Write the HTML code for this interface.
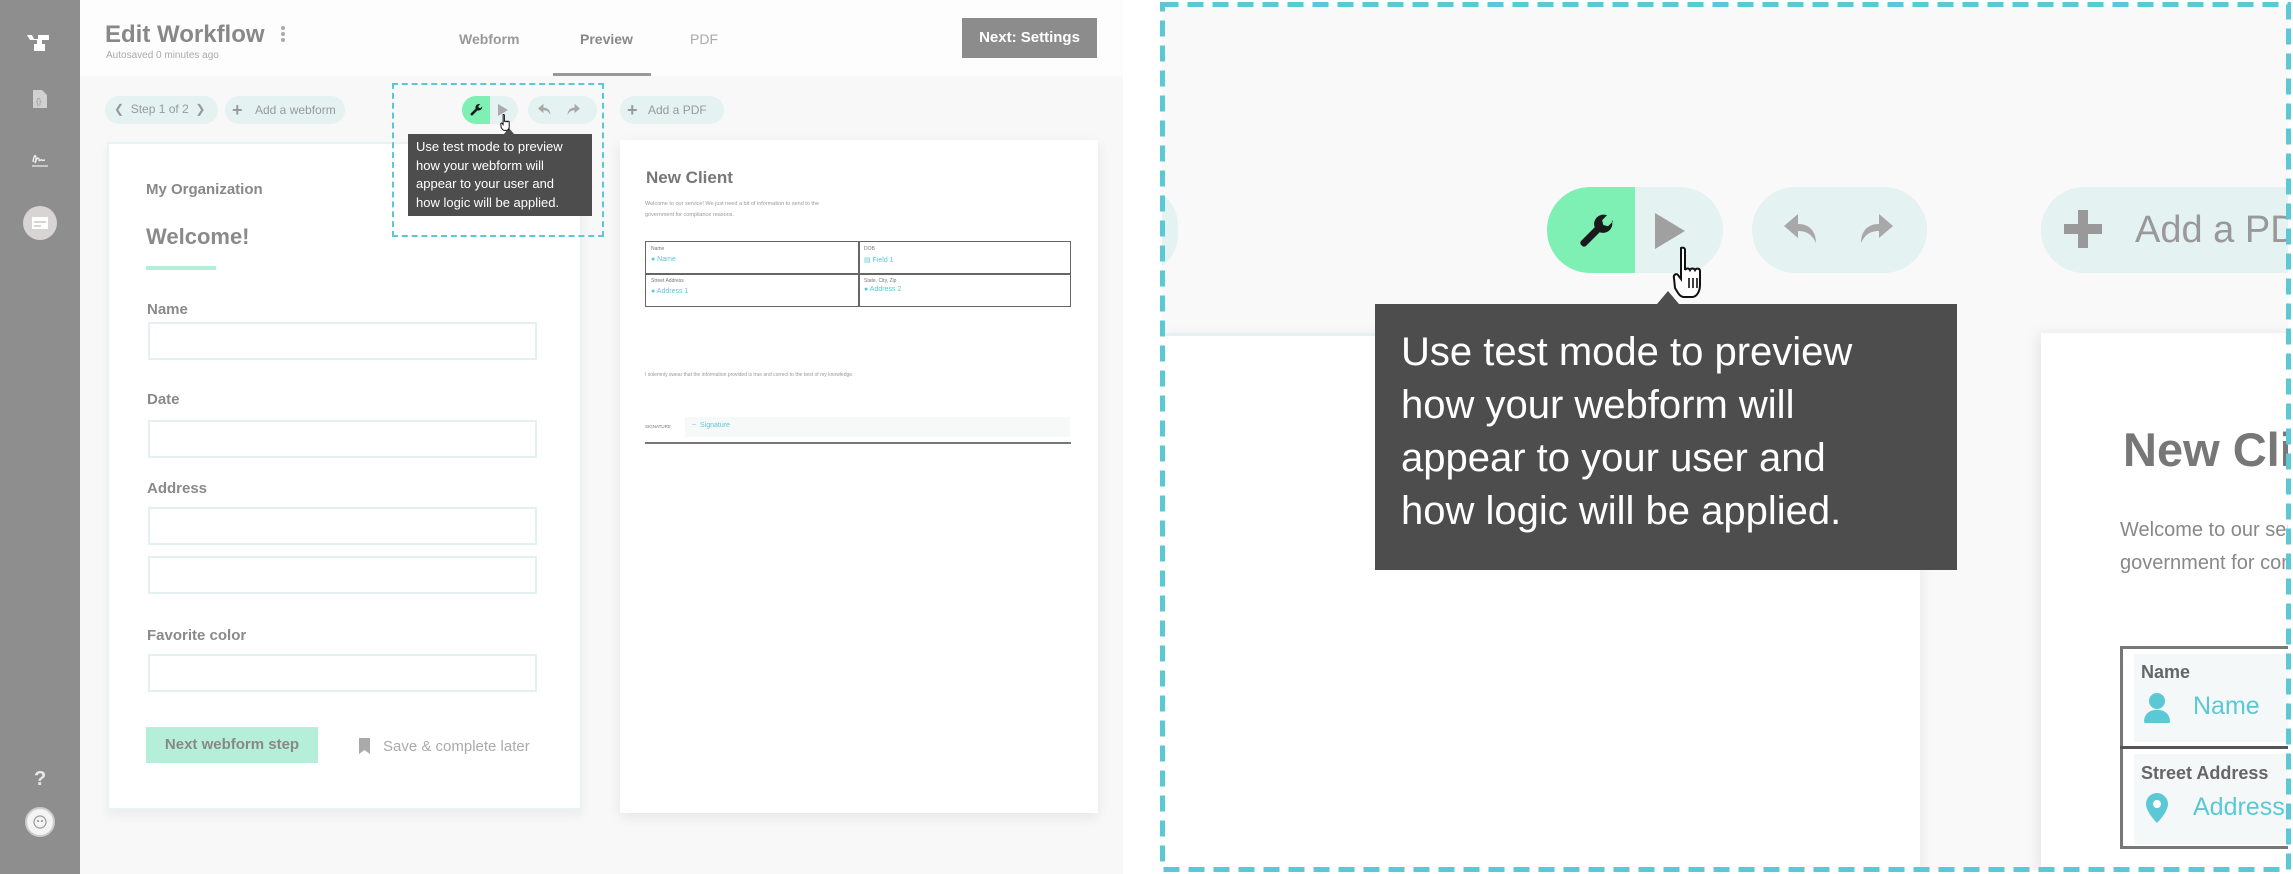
<!DOCTYPE html>
<html><head><meta charset="utf-8">
<style>
*{margin:0;padding:0;box-sizing:border-box}
html,body{width:2293px;height:874px;overflow:hidden}
body{background:#f8f8f8;font-family:"Liberation Sans Narrow","Liberation Sans",sans-serif;position:relative}
.a{position:absolute}
.t{position:absolute;white-space:nowrap}
.pill{position:absolute;background:#e4f2f2;border-radius:16px}
.inp{position:absolute;left:39px;width:389px;height:38px;border:2px solid #e3f1f1;background:#fff}
.lbl{position:absolute;left:38px;font-size:15px;font-weight:bold;color:#8a8a8a}
.L{font-family:'Liberation Sans',sans-serif}
</style></head><body>

<!-- sidebar -->
<div class="a" style="left:0;top:0;width:80px;height:874px;background:#8e8e8e"></div>
<svg class="a" style="left:27px;top:35px" width="26" height="20" viewBox="0 0 26 20"><path d="M0 0h5l2 4h4V0h11v5h-7v4h3v7H7V9h3V5H3z" fill="#fff"/></svg>
<svg class="a" style="left:33px;top:90px" width="14" height="18" viewBox="0 0 14 18"><path d="M0 0h9l5 5v13H0z" fill="#d0d0d0"/><text x="3" y="14" font-size="8" fill="#999">{}</text></svg>
<svg class="a" style="left:31px;top:150px" width="18" height="18" viewBox="0 0 18 18"><path d="M2 12c1-8 3-8 3-3s-2 4 0 1 3-2 3 0 2-1 3 0 2 0 3 0" stroke="#eee" fill="none" stroke-width="1.4"/><path d="M1 16h16" stroke="#eee" stroke-width="1.2"/></svg>
<div class="a" style="left:23px;top:206px;width:34px;height:34px;border-radius:50%;background:#d8d4d4"></div>
<div class="a" style="left:32px;top:217px;width:16px;height:12px;background:#fff"></div>
<div class="a" style="left:34px;top:221px;width:12px;height:2px;background:#d8d4d4"></div>
<div class="a" style="left:34px;top:225px;width:7px;height:1.5px;background:#d8d4d4"></div>
<div class="t" style="left:34px;top:768px;font-size:20px;font-weight:bold;color:#e8e8e8">?</div>
<div class="a" style="left:25px;top:807px;width:30px;height:30px;border-radius:50%;background:#f4f4f4;border:2px solid #ccc"></div>
<svg class="a" style="left:30px;top:812px" width="20" height="20" viewBox="0 0 20 20"><circle cx="10" cy="10" r="6" fill="none" stroke="#999" stroke-width="1.2"/><circle cx="8" cy="9" r="1" fill="#888"/><circle cx="12" cy="9" r="1" fill="#888"/></svg>

<!-- header -->
<div class="a" style="left:80px;top:0;width:1043px;height:76px;background:#fdfdfd"></div>
<div class="t" style="left:105px;top:21px;font-size:24px;font-weight:bold;color:#888">Edit Workflow</div>
<div class="a" style="left:281px;top:26px;width:4px;height:4px;border-radius:2px;background:#aaa;box-shadow:0 6px 0 #aaa,0 12px 0 #aaa"></div>
<div class="t" style="left:106px;top:50px;font-size:10px;color:#aaa">Autosaved 0 minutes ago</div>
<div class="t" style="left:459px;top:31px;font-size:14px;font-weight:bold;color:#999">Webform</div>
<div class="t" style="left:580px;top:31px;font-size:14px;font-weight:bold;color:#888">Preview</div>
<div class="t" style="left:690px;top:31px;font-size:14px;color:#aaa">PDF</div>
<div class="a" style="left:553px;top:73px;width:98px;height:3px;background:#999"></div>
<div class="a" style="left:962px;top:18px;width:135px;height:40px;background:#8c8c8c;color:#fff;font-weight:bold;font-size:15px;text-align:center;line-height:40px">Next: Settings</div>

<!-- toolbar -->
<div class="pill" style="left:105px;top:96px;width:113px;height:28px"></div>
<div class="t" style="left:114px;top:102px;font-size:12px;color:#999">❮&nbsp; Step 1 of 2 &nbsp;❯</div>
<div class="pill" style="left:225px;top:96px;width:120px;height:28px"></div>
<div class="t" style="left:232px;top:100px;font-size:18px;color:#999;font-weight:bold">+</div>
<div class="t" style="left:255px;top:103px;font-size:12px;color:#999">Add a webform</div>
<div class="pill" style="left:462px;top:96px;width:56px;height:28px;overflow:hidden"><div class="a" style="left:0;top:0;width:28px;height:28px;background:#7ef0b3"></div></div>
<svg class="a" style="left:470px;top:103px" width="13" height="13" viewBox="0 0 24 24"><path d="M22.7 6.2l-3.3 3.3-3.2-.8-.8-3.2 3.3-3.3c-2.3-.9-5-.4-6.8 1.4-1.8 1.8-2.3 4.4-1.4 6.6L1.5 19.2c-.8.8-.8 2 0 2.8l.5.5c.8.8 2 .8 2.8 0l9-9c2.2.9 4.8.4 6.6-1.4 1.8-1.8 2.3-4.4 1.4-6.6z" fill="#1a1a1a"/></svg>
<svg class="a" style="left:497px;top:103px" width="12" height="14"><path d="M1 1L11 7L1 13z" fill="#aaa"/></svg>
<div class="pill" style="left:528px;top:96px;width:69px;height:28px"></div>
<svg class="a" style="left:537px;top:103px" width="16" height="14" viewBox="0 0 40 36"><path d="M16 2L2 14l14 12v-7c8 0 14 3 18 12 0-10-5-19-18-19z" fill="#a8a8a8"/></svg>
<svg class="a" style="left:565px;top:103px" width="16" height="14" viewBox="0 0 40 36"><path d="M24 2l14 12-14 12v-7c-8 0-14 3-18 12 0-10 5-19 18-19z" fill="#a8a8a8"/></svg>
<div class="pill" style="left:620px;top:96px;width:104px;height:28px"></div>
<div class="t" style="left:627px;top:100px;font-size:18px;color:#999;font-weight:bold">+</div>
<div class="t" style="left:648px;top:103px;font-size:12px;color:#999">Add a PDF</div>

<!-- left card -->
<div class="a" style="left:107px;top:142px;width:475px;height:668px;background:#fff;border:2px solid #e8f3f3;box-shadow:0 6px 10px rgba(0,0,0,.05)">
 <div class="t" style="left:37px;top:37px;font-size:15px;font-weight:bold;color:#888">My Organization</div>
 <div class="t" style="left:37px;top:80px;font-size:22px;font-weight:bold;color:#8a8a8a">Welcome!</div>
 <div class="a" style="left:37px;top:122px;width:70px;height:4px;background:#b5efd9"></div>
 <div class="lbl" style="top:157px">Name</div>
 <div class="inp" style="top:178px"></div>
 <div class="lbl" style="top:247px">Date</div>
 <div class="inp" style="top:276px"></div>
 <div class="lbl" style="top:336px">Address</div>
 <div class="inp" style="top:363px"></div>
 <div class="inp" style="top:412px"></div>
 <div class="lbl" style="top:483px">Favorite color</div>
 <div class="inp" style="top:510px"></div>
 <div class="a" style="left:37px;top:583px;width:172px;height:36px;background:#b5efd9;color:#888;font-weight:bold;font-size:15px;text-align:center;line-height:36px">Next webform step</div>
 <div class="a" style="left:250px;top:594px;width:11px;height:16px;background:#aaa;clip-path:polygon(0 0,100% 0,100% 100%,50% 75%,0 100%)"></div>
 <div class="t" style="left:274px;top:594px;font-size:15px;color:#aaa">Save &amp; complete later</div>
</div>

<!-- right card -->
<div class="a" style="left:620px;top:140px;width:478px;height:673px;background:#fff;box-shadow:0 4px 12px rgba(0,0,0,.08)">
 <div class="t L" style="left:26px;top:28px;font-size:17px;font-weight:bold;color:#777">New Client</div>
 <div class="t L" style="left:25px;top:59px;font-size:5.5px;color:#999;line-height:11px">Welcome to our service! We just need a bit of information to send to the<br>government for compliance reasons.</div>
 <div class="a" style="left:25px;top:101px;width:426px;height:66px;border:1.5px solid #666"></div>
 <div class="a" style="left:25px;top:133px;width:426px;height:1.5px;background:#666"></div>
 <div class="a" style="left:238px;top:101px;width:1.5px;height:66px;background:#666"></div>
 <div class="t L" style="left:31px;top:106px;font-size:5px;color:#777">Name</div>
 <div class="t L" style="left:31px;top:116px;font-size:7px;color:#5bc8d6">● Name</div>
 <div class="t L" style="left:244px;top:106px;font-size:5px;color:#777">DOB</div>
 <div class="t L" style="left:244px;top:116px;font-size:7px;color:#5bc8d6">▤ Field 1</div>
 <div class="t L" style="left:31px;top:138px;font-size:5px;color:#777">Street Address</div>
 <div class="t L" style="left:31px;top:148px;font-size:7px;color:#5bc8d6">● Address 1</div>
 <div class="t L" style="left:244px;top:138px;font-size:5px;color:#777">State, City, Zip</div>
 <div class="t L" style="left:244px;top:146px;font-size:7px;color:#5bc8d6">● Address 2</div>
 <div class="t L" style="left:25px;top:232px;font-size:5px;color:#999">I solemnly swear that the information provided is true and correct to the best of my knowledge.</div>
 <div class="a" style="left:65px;top:277px;width:385px;height:20px;background:#f7f9f9"></div>
 <div class="t L" style="left:25px;top:284px;font-size:4.5px;color:#777">SIGNATURE</div>
 <div class="t L" style="left:72px;top:282px;font-size:7px;color:#5bc8d6">~ &nbsp;Signature</div>
 <div class="a" style="left:25px;top:302px;width:426px;height:1.5px;background:#777"></div>
</div>

<!-- small dashed box & tooltip -->
<div class="a" style="left:392px;top:83px;width:212px;height:154px;border:2px dashed #5bc8d6"></div>
<div class="a" style="left:408px;top:134px;width:184px;height:82px;background:#4d4d4d"></div>
<div class="a" style="left:504px;top:128px;width:0;height:0;border-left:5px solid transparent;border-right:5px solid transparent;border-bottom:6px solid #4d4d4d"></div>
<div class="t" style="left:416px;top:138px;font-size:13px;line-height:18.5px;color:#fff">Use test mode to preview<br>how your webform will<br>appear to your user and<br>how logic will be applied.</div>
<svg class="a" style="left:500px;top:114px" width="12" height="18" viewBox="0 0 36 56"><path d="M9 2c2-1 4 0 4 2v20c1-2 4-2 5 0 1-2 4-2 5 0 1-2 5-2 5 1v14c0 6-3 12-8 12h-8c-4 0-6-4-9-9L2 32c-1-3 2-5 4-3l3 4V4z" fill="#fff" stroke="#111" stroke-width="3"/></svg>

<!-- divider -->
<div class="a" style="left:1123px;top:0;width:1170px;height:874px;background:#fff"></div>

<!-- zoom view -->
<div class="a" style="left:1162px;top:5px;width:1126px;height:865px;background:#f9f9f9;overflow:hidden">
 <div class="a" style="left:0;top:328px;width:758px;height:540px;background:#fff;border-top:3px solid #e6f2f2;box-shadow:4px 0 10px rgba(0,0,0,.05)"></div>
 <div class="a" style="left:879px;top:328px;width:260px;height:540px;background:#fff;box-shadow:-4px 0 12px rgba(0,0,0,.07)"></div>
 <div class="pill" style="left:-60px;top:182px;width:76px;height:86px;border-radius:43px"></div>
 <div class="pill" style="left:385px;top:182px;width:176px;height:86px;border-radius:43px;overflow:hidden"><div class="a" style="left:0;top:0;width:88px;height:86px;background:#7ef0b3"></div></div>
 <svg class="a" style="left:417px;top:207px" width="36" height="36" viewBox="0 0 24 24"><path d="M22.7 6.2l-3.3 3.3-3.2-.8-.8-3.2 3.3-3.3c-2.3-.9-5-.4-6.8 1.4-1.8 1.8-2.3 4.4-1.4 6.6L1.5 19.2c-.8.8-.8 2 0 2.8l.5.5c.8.8 2 .8 2.8 0l9-9c2.2.9 4.8.4 6.6-1.4 1.8-1.8 2.3-4.4 1.4-6.6z" fill="#1a1a1a"/></svg>
 <svg class="a" style="left:493px;top:208px" width="30" height="36"><path d="M0 0L30 18L0 36z" fill="#a0a0a0"/></svg>
 <div class="pill" style="left:590px;top:182px;width:175px;height:86px;border-radius:43px"></div>
 <svg class="a" style="left:620px;top:207px" width="40" height="36" viewBox="0 0 40 36"><path d="M16 2L2 14l14 12v-7c8 0 14 3 18 12 0-10-5-19-18-19z" fill="#a8a8a8"/></svg>
 <svg class="a" style="left:693px;top:207px" width="40" height="36" viewBox="0 0 40 36"><path d="M24 2l14 12-14 12v-7c-8 0-14 3-18 12 0-10 5-19 18-19z" fill="#a8a8a8"/></svg>
 <div class="pill" style="left:879px;top:182px;width:300px;height:86px;border-radius:43px"></div>
 <div class="a" style="left:902px;top:219px;width:38px;height:10px;background:#999"></div>
 <div class="a" style="left:916px;top:205px;width:10px;height:38px;background:#999"></div>
 <div class="t" style="left:973px;top:204px;font-size:38px;color:#999">Add a PDF</div>

 <div class="a" style="left:213px;top:299px;width:582px;height:266px;background:#4d4d4d"></div>
 <div class="a" style="left:495px;top:286px;width:0;height:0;border-left:11px solid transparent;border-right:11px solid transparent;border-bottom:13px solid #4d4d4d"></div>
 <div class="t" style="left:239px;top:321px;font-size:40px;line-height:53px;color:#fff">Use test mode to preview<br>how your webform will<br>appear to your user and<br>how logic will be applied.</div>
 <svg class="a" style="left:510px;top:241px" width="36" height="56" viewBox="0 0 36 56"><path d="M9 2c2-1 4 0 4 2v20c1-2 4-2 5 0 1-2 4-2 5 0 1-2 5-2 5 1v14c0 6-3 12-8 12h-8c-4 0-6-4-9-9L2 32c-1-3 2-5 4-3l3 4V4z" fill="#fff" stroke="#111" stroke-width="2"/><path d="M17 32v10M21 32v10M25 32v10" stroke="#111" stroke-width="1.6"/></svg>

 <div class="t L" style="left:961px;top:417px;font-size:47px;font-weight:bold;color:#777">New Client</div>
 <div class="t L" style="left:958px;top:509px;font-size:20px;line-height:33px;color:#888">Welcome to our service! We just need<br>government for compliance reasons.</div>
 <div class="a" style="left:958px;top:641px;width:200px;height:203px;border:3px solid #777"></div>
 <div class="a" style="left:958px;top:741px;width:200px;height:3px;background:#555"></div>
 <div class="a" style="left:972px;top:649px;width:160px;height:88px;background:#f5f8f8"></div>
 <div class="a" style="left:972px;top:749px;width:160px;height:90px;background:#f5f8f8"></div>
 <div class="t L" style="left:979px;top:657px;font-size:18px;font-weight:bold;color:#666">Name</div>
 <div class="a" style="left:987px;top:688px;width:16px;height:16px;border-radius:50%;background:#5bc8d6"></div>
 <div class="a" style="left:982px;top:705px;width:26px;height:13px;border-radius:13px 13px 2px 2px;background:#5bc8d6"></div>
 <div class="t L" style="left:1031px;top:687px;font-size:25px;color:#5bc8d6">Name</div>
 <div class="t L" style="left:979px;top:758px;font-size:18px;font-weight:bold;color:#666">Street Address</div>
 <svg class="a" style="left:984px;top:788px" width="22" height="30" viewBox="0 0 22 30"><path d="M11 0C5 0 0 5 0 11c0 8 11 19 11 19s11-11 11-19C22 5 17 0 11 0z" fill="#5bc8d6"/><circle cx="11" cy="11" r="4" fill="#fff"/></svg>
 <div class="t L" style="left:1031px;top:788px;font-size:25px;color:#5bc8d6">Address 1</div>
</div>

<svg class="a" style="left:1158px;top:0" width="1135" height="874"><rect x="4.5" y="4.5" width="1126" height="865" fill="none" stroke="#5bc8d6" stroke-width="5" stroke-dasharray="16 9"/></svg>
</body></html>
